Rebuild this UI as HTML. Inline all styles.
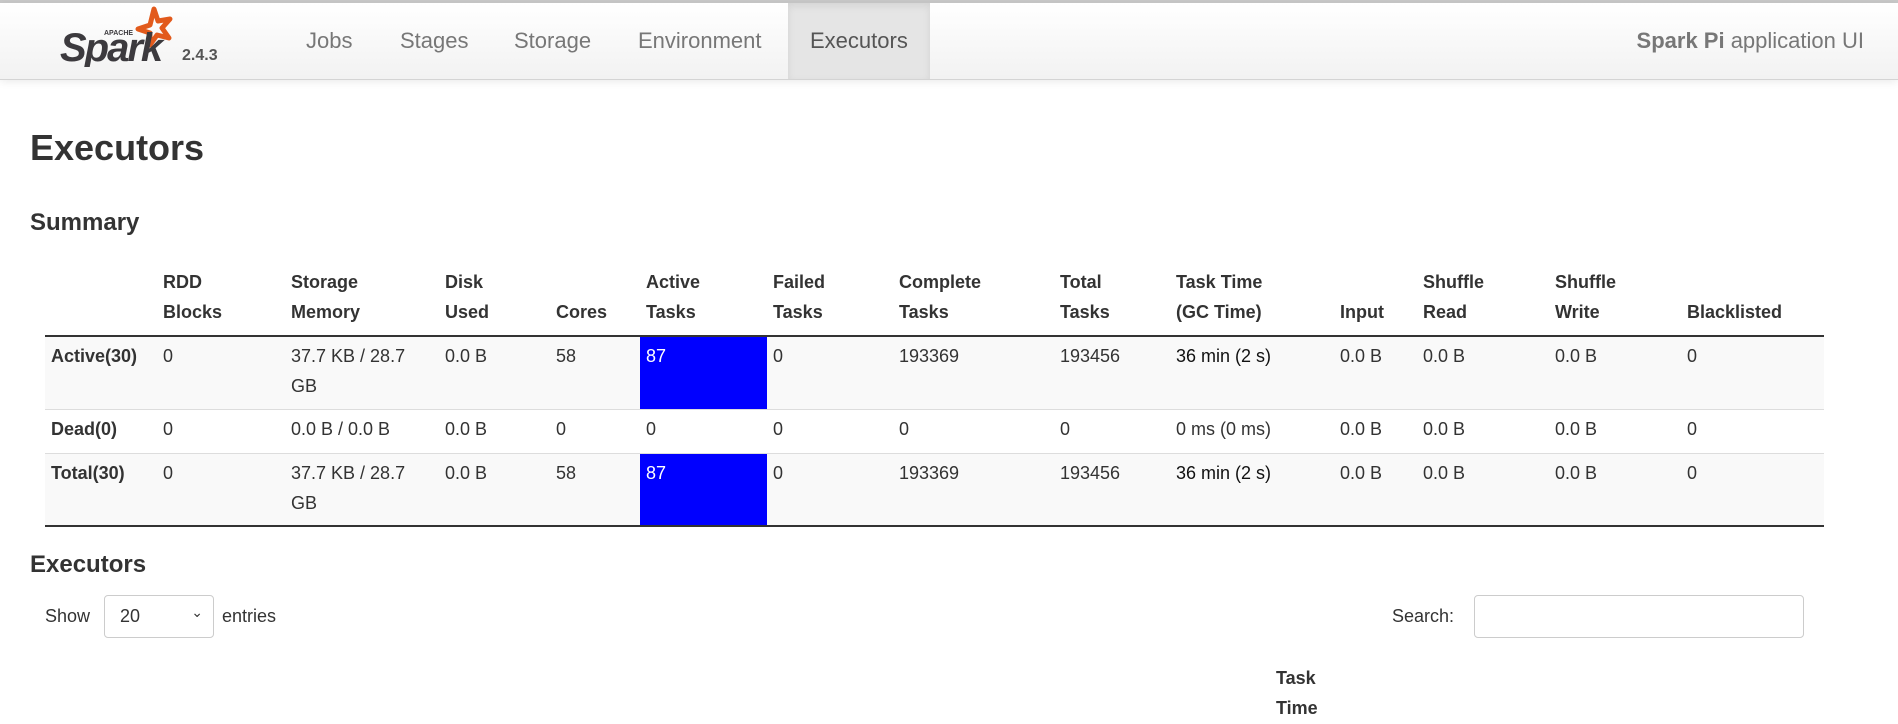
<!DOCTYPE html>
<html><head><meta charset="utf-8"><style>
body{margin:0;width:1898px;height:724px;overflow:hidden;background:#fff;font-family:"Liberation Sans",Arial,sans-serif;color:#333;font-size:18px;}
.top{position:absolute;left:0;top:0;width:1898px;height:3px;background:#c8c8c8}
.nav{position:absolute;left:0;top:3px;width:1898px;height:76px;background:linear-gradient(#fff,#f2f2f2);border-bottom:1px solid #d4d4d4;box-shadow:0 2px 8px rgba(0,0,0,.08)}
.nav a{position:absolute;top:0;height:76px;line-height:76px;font-size:22px;color:#777;text-decoration:none}
.nav .act{background:#e5e5e5;color:#555;padding:0 22px;box-shadow:inset 0 3px 8px rgba(0,0,0,.08)}
.ver{position:absolute;left:182px;top:44px;font-size:16px;font-weight:bold;color:#555}
.right{position:absolute;right:34px;top:0;line-height:76px;font-size:22px;color:#777}
h3{position:absolute;left:30px;top:126px;margin:0;font-size:36px;font-weight:bold;line-height:44px;color:#333}
h4{position:absolute;left:30px;margin:0;font-size:24px;font-weight:bold;color:#333}
table{position:absolute;left:45px;top:263px;border-collapse:collapse;table-layout:fixed;width:1779px}
th,td{text-align:left;vertical-align:top;padding:4px 6px;line-height:30px;font-size:18px}
th{vertical-align:bottom;font-weight:bold;padding-bottom:8px;border-bottom:2px solid #333}
tr.g td{background:#f9f9f9}
tbody tr td{border-top:1px solid #ddd}
tbody tr:last-child td{border-bottom:2px solid #333}
td.b{background:#00f!important;color:#fff}
td.l{font-weight:bold}
.sel{position:absolute;left:104px;top:595px;width:110px;height:43px;border:1px solid #ccc;border-radius:4px;box-sizing:border-box}
.inp{position:absolute;left:1474px;top:595px;width:330px;height:43px;border:1px solid #ccc;border-radius:4px;box-sizing:border-box}
</style></head><body>
<div class="top"></div>
<div class="nav">
<svg style="position:absolute;left:56px;top:2px" width="130" height="62" viewBox="0 0 130 62">
<polygon points="98,4 102,16 114,14 106,23 113,33 101,30 94,40 94,28 82,24 94,20" fill="none" stroke="#e25a1c" stroke-width="5" stroke-linejoin="round"/>
<text x="48" y="30" font-size="7" font-weight="bold" fill="#3c3a3e" font-family="Liberation Sans">APACHE</text>
<text x="4" y="56" font-size="40" font-weight="bold" font-style="italic" fill="#3c3a3e" font-family="Liberation Sans" letter-spacing="-2">Spark</text>
</svg>
<div class="ver">2.4.3</div>
<a style="left:306px">Jobs</a>
<a style="left:400px">Stages</a>
<a style="left:514px">Storage</a>
<a style="left:638px">Environment</a>
<a class="act" style="left:788px">Executors</a>
<div class="right"><b style="color:#777">Spark Pi</b> application UI</div>
</div>
<h3>Executors</h3>
<h4 style="top:209px">Summary</h4>
<table>
<colgroup><col style="width:112px"><col style="width:128px"><col style="width:154px"><col style="width:111px"><col style="width:90px"><col style="width:127px"><col style="width:126px"><col style="width:161px"><col style="width:116px"><col style="width:164px"><col style="width:83px"><col style="width:132px"><col style="width:132px"><col style="width:143px"></colgroup>
<thead><tr><th></th><th>RDD<br>Blocks</th><th>Storage<br>Memory</th><th>Disk<br>Used</th><th>Cores</th><th>Active<br>Tasks</th><th>Failed<br>Tasks</th><th>Complete<br>Tasks</th><th>Total<br>Tasks</th><th>Task Time<br>(GC Time)</th><th>Input</th><th>Shuffle<br>Read</th><th>Shuffle<br>Write</th><th>Blacklisted</th></tr></thead>
<tbody>
<tr class="g" style="height:73px"><td class="l">Active(30)</td><td>0</td><td>37.7 KB / 28.7<br>GB</td><td>0.0 B</td><td>58</td><td class="b">87</td><td>0</td><td>193369</td><td>193456</td><td style="color:#111">36 min (2 s)</td><td>0.0 B</td><td>0.0 B</td><td>0.0 B</td><td>0</td></tr>
<tr style="height:44px"><td class="l">Dead(0)</td><td>0</td><td>0.0 B / 0.0 B</td><td>0.0 B</td><td>0</td><td>0</td><td>0</td><td>0</td><td>0</td><td>0 ms (0 ms)</td><td>0.0 B</td><td>0.0 B</td><td>0.0 B</td><td>0</td></tr>
<tr class="g" style="height:73px"><td class="l">Total(30)</td><td>0</td><td>37.7 KB / 28.7<br>GB</td><td>0.0 B</td><td>58</td><td class="b">87</td><td>0</td><td>193369</td><td>193456</td><td style="color:#111">36 min (2 s)</td><td>0.0 B</td><td>0.0 B</td><td>0.0 B</td><td>0</td></tr>
</tbody></table>
<h4 style="top:551px">Executors</h4>
<div style="position:absolute;left:45px;top:606px">Show</div>
<div class="sel"><span style="position:absolute;left:15px;top:10px">20</span><span style="position:absolute;right:10px;top:8px;font-size:14px">&#8964;</span></div>
<div style="position:absolute;left:222px;top:606px">entries</div>
<div style="position:absolute;left:1392px;top:606px">Search:</div>
<div class="inp"></div>
<div style="position:absolute;left:1276px;top:663px;font-weight:bold;line-height:30px">Task<br>Time</div>
</body></html>
